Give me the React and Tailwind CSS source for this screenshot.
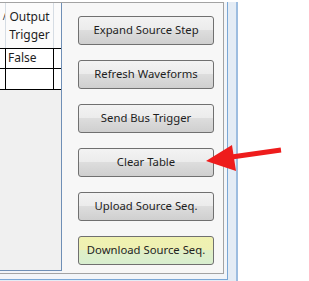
const buttons = [
  "Expand Source Step",
  "Refresh Waveforms",
  "Send Bus Trigger",
  "Clear Table",
  "Upload Source Seq.",
];

function Btn({ label, green }) {
  return (
    <button
      className={
        "h-[29px] w-[136px] rounded-[3px] border border-[#707070] text-[11.3px] text-[#1e1e1e] " +
        (green
          ? "bg-[linear-gradient(#f0f2b0,#eef0b4_50%,#e0efc6_50%,#d8eed0)]"
          : "bg-[linear-gradient(#f3f3f3,#ebebeb_50%,#dddddd_50%,#cfcfcf)]")
      }
    >
      {label}
    </button>
  );
}

export default function App() {
  return (
    <div className="relative h-[281px] w-[309px] overflow-hidden bg-white font-['Noto_Sans',sans-serif]">
      <div className="h-[281px] w-[238px] border-b border-r-2 border-[#9dbde0] bg-[#e4ecf5]">
        <div className="h-[278px] w-[228px] border-b border-r border-[#7aa7d6] bg-[#f2f5f9]">
          <div className="mt-[2px] flex h-[272px] w-[224px] border-y border-r border-[#a3a3a3]">
            {/* table */}
            <div className="flex h-[268px] w-[62px] flex-col border-b border-r border-[#6f8fb6] bg-[#f0f0f0]">
              <div className="flex h-[46px] border-b border-black bg-[#fbfbfb]">
                <div className="w-[6px] overflow-hidden border-r border-[#d6dde4] text-right text-[9px] leading-[28px] text-[#1e1e1e]">
                  <span className="mr-[-1px]">/</span>
                </div>
                <div className="flex w-[48px] flex-col items-center justify-center border-r border-[#d6dde4] text-[12px] leading-[18px] text-[#1e1e1e]">
                  <span>Output</span>
                  <span>Trigger</span>
                </div>
              </div>
              <div className="flex h-[20px] border-b border-black bg-white">
                <div className="w-[6px] border-r border-black" />
                <div className="w-[48px] border-r border-black pl-[2px] text-[12px] leading-[18px] text-[#1e1e1e]">False</div>
              </div>
              <div className="flex h-[21px] border-b border-black bg-white">
                <div className="w-[6px] border-r border-black" />
                <div className="w-[48px] border-r border-black" />
              </div>
            </div>
            {/* buttons */}
            <div className="flex flex-1 flex-col gap-[15px] bg-[#f7f7f7] pl-[16px] pt-[13px]">
              {buttons.map((b) => (
                <Btn key={b} label={b} />
              ))}
              <Btn label="Download Source Seq." green />
            </div>
          </div>
        </div>
      </div>
      <svg className="absolute left-0 top-0" width="309" height="281">
        <line x1="228" y1="157.5" x2="281" y2="150" stroke="#ee1c1c" strokeWidth="5" />
        <polygon points="206,161 232,145 236,171" fill="#ee1c1c" />
      </svg>
    </div>
  );
}
